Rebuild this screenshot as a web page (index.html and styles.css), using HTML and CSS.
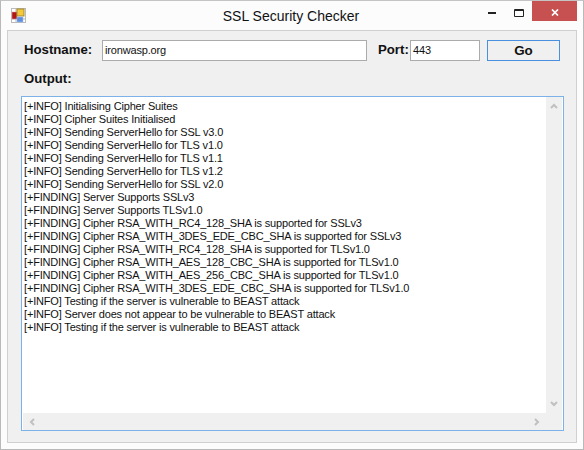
FILE: index.html
```html
<!DOCTYPE html>
<html lang="en">
<head>
  <meta charset="UTF-8">
  <meta name="viewport" content="width=device-width, initial-scale=1.0">
  <title>SSL Security Checker</title>
  <link rel="stylesheet" href="styles.css">
</head>
<body>

<div class="window">
  <div class="titlebar">
    <svg class="app-icon" width="16" height="16" viewBox="0 0 16 16">
      <rect x="0.5" y="0.5" width="14" height="14" fill="#fff" stroke="#bbb"/>
      <path d="M5 0v15M0 5h5M0 11h15M11 11v4" stroke="#bbb" fill="none"/>
      <rect x="1" y="4" width="5" height="7" fill="#b01818" stroke="#d9a0a0" stroke-width="0.5"/>
      <rect x="6" y="1" width="7" height="7" fill="#f6c83c" stroke="#a58a30"/>
      <rect x="6" y="9" width="6" height="5" fill="#5f8ee0" stroke="#a8c0ec" stroke-width="0.5"/>
    </svg>
    <div class="title">SSL Security Checker</div>
    <div class="win-btn">
      <svg width="8" height="3" viewBox="0 0 8 3"><rect width="8" height="2" y="1" fill="#222"/></svg>
    </div>
    <div class="win-btn">
      <svg width="10" height="8" viewBox="0 0 10 8"><path d="M0.5 0.5h9v7h-9zM0.5 1.5h9" fill="none" stroke="#222"/></svg>
    </div>
    <div class="close-btn">
      <svg width="8" height="7" viewBox="0 0 8 7"><path d="M1 0.5l6 6M7 0.5l-6 6" stroke="#fff" stroke-width="1.7" fill="none"/></svg>
    </div>
  </div>

  <div class="client">
    <div class="form-row">
      <label class="host-label">Hostname:</label>
      <div class="field host-field">ironwasp.org</div>
      <label class="port-label">Port:</label>
      <div class="field port-field">443</div>
      <button class="go-btn">Go</button>
    </div>

    <div class="output-label">Output:</div>

    <div class="output-box">
      <div class="output-main">
        <div class="output-text">
          <div>[+INFO] Initialising Cipher Suites</div>
          <div>[+INFO] Cipher Suites Initialised</div>
          <div>[+INFO] Sending ServerHello for SSL v3.0</div>
          <div>[+INFO] Sending ServerHello for TLS v1.0</div>
          <div>[+INFO] Sending ServerHello for TLS v1.1</div>
          <div>[+INFO] Sending ServerHello for TLS v1.2</div>
          <div>[+INFO] Sending ServerHello for SSL v2.0</div>
          <div>[+FINDING] Server Supports SSLv3</div>
          <div>[+FINDING] Server Supports TLSv1.0</div>
          <div>[+FINDING] Cipher RSA_WITH_RC4_128_SHA is supported for SSLv3</div>
          <div>[+FINDING] Cipher RSA_WITH_3DES_EDE_CBC_SHA is supported for SSLv3</div>
          <div>[+FINDING] Cipher RSA_WITH_RC4_128_SHA is supported for TLSv1.0</div>
          <div>[+FINDING] Cipher RSA_WITH_AES_128_CBC_SHA is supported for TLSv1.0</div>
          <div>[+FINDING] Cipher RSA_WITH_AES_256_CBC_SHA is supported for TLSv1.0</div>
          <div>[+FINDING] Cipher RSA_WITH_3DES_EDE_CBC_SHA is supported for TLSv1.0</div>
          <div>[+INFO] Testing if the server is vulnerable to BEAST attack</div>
          <div>[+INFO] Server does not appear to be vulnerable to BEAST attack</div>
          <div>[+INFO] Testing if the server is vulnerable to BEAST attack</div>
        </div>
        <div class="scroll-v">
          <svg width="8" height="6" viewBox="0 0 8 6"><path d="M1 5l3-3 3 3" stroke="#c0c0c0" stroke-width="2" fill="none"/></svg>
          <svg width="8" height="6" viewBox="0 0 8 6"><path d="M1 1l3 3 3-3" stroke="#c0c0c0" stroke-width="2" fill="none"/></svg>
        </div>
      </div>
      <div class="scroll-h">
        <svg width="6" height="8" viewBox="0 0 6 8"><path d="M5 1L2 4l3 3" stroke="#c0c0c0" stroke-width="2" fill="none"/></svg>
        <svg width="6" height="8" viewBox="0 0 6 8"><path d="M1 1l3 3-3 3" stroke="#c0c0c0" stroke-width="2" fill="none"/></svg>
      </div>
    </div>
  </div>
</div>

</body>
</html>
```

FILE: styles.css
```css
html, body {
  margin: 0;
  padding: 0;
}

body {
  font-family: 'Liberation Sans', Arial, sans-serif;
  background-color: #fff;
  overflow: hidden;
}

.window {
  box-sizing: border-box;
  width: 584px;
  height: 450px;
  border: 1px solid #b9b9b9;
  border-top-color: #c4c4c4;
  background-color: #fcfcfc;
  padding: 0 6px 6px 6px;
  display: flex;
  flex-direction: column;
}

/* Title bar */
.titlebar {
  height: 29px;
  flex-shrink: 0;
  display: flex;
  align-items: flex-start;
  margin-left: 4px;
}

.app-icon {
  margin-top: 7px;
}

.title {
  flex: 1;
  text-align: center;
  font-size: 14px;
  line-height: 30px;
  color: #111;
  padding-left: 77px;
}

.win-btn {
  width: 27px;
  height: 23px;
  display: flex;
  align-items: center;
  justify-content: center;
}

.close-btn {
  box-sizing: border-box;
  width: 45px;
  height: 20px;
  padding-top: 2px;
  background-color: #c75050;
  display: flex;
  align-items: center;
  justify-content: center;
}

/* Client area */
.client {
  flex: 1;
  min-height: 0;
  border: 1px solid #d0d0d0;
  background-color: #f0f0f0;
  padding: 8px 12px 11px 13px;
  display: flex;
  flex-direction: column;
}

.form-row {
  display: flex;
  align-items: center;
  height: 22px;
}

.host-label, .port-label, .output-label {
  font-size: 13.2px;
  font-weight: bold;
  color: #111;
}

.host-label {
  width: 78px;
  margin-left: 3px;
  margin-top: -2px;
}

.port-label {
  margin-left: 11px;
  margin-top: -2px;
  width: 32px;
}

.field {
  box-sizing: border-box;
  height: 21px;
  border: 1px solid #ababab;
  background-color: #fff;
  font-size: 11px;
  letter-spacing: -0.17px;
  line-height: 19px;
  padding-left: 2px;
  color: #111;
}

.host-field {
  width: 265px;
}

.port-field {
  width: 70px;
}

.go-btn {
  box-sizing: border-box;
  width: 73px;
  height: 21px;
  margin-left: 7px;
  border: 1px solid #4a90e0;
  background-color: #f0f0f0;
  font-family: inherit;
  font-size: 13.4px;
  font-weight: bold;
  color: #111;
  padding: 0;
}

.output-label {
  margin: 10px 0 0 3px;
  line-height: 15px;
}

.output-box {
  flex: 1;
  min-height: 0;
  margin-top: 10px;
  border: 1px solid #7db2e8;
  background-color: #fff;
  display: flex;
  flex-direction: column;
  padding: 0 1px 0 0;
}

.output-main {
  flex: 1;
  min-height: 0;
  display: flex;
}

.output-text {
  flex: 1;
  padding: 3px 0 0 2px;
  font-size: 11px;
  letter-spacing: -0.17px;
  line-height: 13px;
  color: #111;
  white-space: nowrap;
}

.scroll-v {
  width: 16px;
  background-color: #f0f0f0;
  display: flex;
  flex-direction: column;
  align-items: center;
  justify-content: space-between;
  padding: 6px 0;
  box-sizing: border-box;
}

.scroll-h {
  height: 17px;
  flex-shrink: 0;
  margin-left: 1px;
  background-color: #f0f0f0;
  display: flex;
  align-items: center;
  justify-content: space-between;
  padding: 0 22px 0 6px;
}
```
